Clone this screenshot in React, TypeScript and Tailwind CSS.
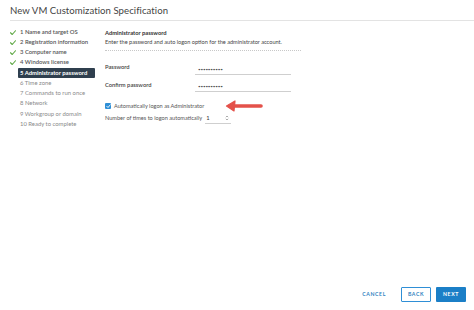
import React from 'react';

const steps = [
  { label: '1 Name and target OS', done: true },
  { label: '2 Registration information', done: true },
  { label: '3 Computer name', done: true },
  { label: '4 Windows license', done: true },
  { label: '5 Administrator password', active: true },
  { label: '6 Time zone' },
  { label: '7 Commands to run once' },
  { label: '8 Network' },
  { label: '9 Workgroup or domain' },
  { label: '10 Ready to complete' },
];

function Check() {
  return (
    <svg width="6" height="5" viewBox="0 0 12 10" fill="none">
      <path d="M1 5.5 L4.5 9 L11 1.5" stroke="#5fa845" strokeWidth="2.2" strokeLinecap="round" strokeLinejoin="round" />
    </svg>
  );
}

function Arrow() {
  return (
    <svg width="38" height="12" viewBox="0 0 38 12">
      <path d="M36 6 L9 6" stroke="#e4514a" strokeWidth="3.6" strokeLinecap="round" />
      <path d="M1.5 6 L10 1 L9 11 Z" fill="#e4514a" stroke="#e4514a" strokeWidth="1.2" strokeLinejoin="round" />
    </svg>
  );
}

function Spinner() {
  return (
    <svg width="4" height="6" viewBox="0 0 4 6" fill="none">
      <path d="M0.8 2.2 L2 1 L3.2 2.2" stroke="#888" strokeWidth="0.7" />
      <path d="M0.8 3.8 L2 5 L3.2 3.8" stroke="#888" strokeWidth="0.7" />
    </svg>
  );
}

export default function App() {
  return (
    <div
      className="w-[474px] h-[310px] bg-white flex flex-col text-[#333]"
      style={{ fontFamily: 'Lato, "Open Sans", sans-serif' }}
    >
      {/* Title */}
      <div className="ml-[10px] h-[21px] pt-[5px] border-b border-[#e3e3e3]">
        <h1 className="text-[9.6px] leading-[12px] text-[#444] tracking-[0.05px]">
          New VM Customization Specification
        </h1>
      </div>

      <div className="flex flex-1">
        {/* Steps */}
        <div className="w-[95px] pt-[6px] pl-[10px]">
          {steps.map((s) => (
            <div key={s.label} className="flex items-center h-[10.25px]">
              <div className="w-[8px] flex items-center">{s.done && <Check />}</div>
              <div
                className={
                  s.active
                    ? 'flex-1 h-[10px] flex items-center pl-[2px] rounded-[1px] bg-[#2f3f4e] text-white font-bold text-[5.9px]'
                    : s.done
                    ? 'flex-1 pl-[2px] text-[5.9px] font-semibold text-[#555]'
                    : 'flex-1 pl-[2px] text-[5.9px] text-[#8a8a8a]'
                }
              >
                {s.label}
              </div>
            </div>
          ))}
        </div>

        {/* Content */}
        <div className="flex-1 pl-[10px] pt-[8px]">
          <div className="w-[196px] border-b border-dotted border-[#c8c8c8] pb-[4px]">
            <div className="text-[5.8px] font-bold text-[#333] leading-[8px]">Administrator password</div>
            <div className="text-[5.6px] text-[#444] leading-[9px]">
              Enter the password and auto logon option for the administrator account.
            </div>
          </div>

          <div className="mt-[12px] flex items-end">
            <div className="w-[90px] text-[5.8px] font-semibold text-[#444] pb-[3px]">Password</div>
            <div className="w-[96px] border-b border-[#cfcfcf] pl-[3px] h-[10px] flex items-center text-[4.6px] tracking-[-0.2px] text-[#555]">
              ••••••••••
            </div>
          </div>
          <div className="mt-[6px] flex items-end">
            <div className="w-[90px] text-[5.8px] font-semibold text-[#444] pb-[3px]">Confirm password</div>
            <div className="w-[96px] border-b border-[#cfcfcf] pl-[3px] h-[10px] flex items-center text-[4.6px] tracking-[-0.2px] text-[#555]">
              ••••••••••
            </div>
          </div>

          <div className="mt-[9px] flex items-center h-[10px]">
            <div className="w-[6px] h-[6px] rounded-[1px] bg-[#2f8fd6] flex items-center justify-center">
              <svg width="5" height="4" viewBox="0 0 10 8" fill="none">
                <path d="M1 4 L4 7 L9 1" stroke="white" strokeWidth="1.8" />
              </svg>
            </div>
            <span className="ml-[3px] text-[5.6px] text-[#555]">Automatically logon as Administrator</span>
            <span className="ml-[21px] flex items-center">
              <Arrow />
            </span>
          </div>

          <div className="mt-[2px] flex items-end h-[11px]">
            <span className="text-[5.6px] text-[#555] pb-[2px]">Number of times to logon automatically</span>
            <div className="ml-[3px] w-[26px] border-b border-[#cfcfcf] flex items-center justify-between pl-[1px] pr-[2px] pb-[1px]">
              <span className="text-[5.8px] text-[#333]">1</span>
              <Spinner />
            </div>
          </div>
        </div>
      </div>

      {/* Footer */}
      <div className="h-[15px] mb-[8px] flex items-center justify-end pr-[8px] gap-[5px]">
        <button className="h-[15px] px-[10px] text-[5.2px] font-bold tracking-[0.6px] text-[#2f7fc0]">CANCEL</button>
        <button className="w-[30px] h-[15px] border border-[#2f8fd6] rounded-[1px] text-[5.2px] font-bold tracking-[0.6px] text-[#2f7fc0] bg-white">
          BACK
        </button>
        <button className="w-[30px] h-[15px] rounded-[1px] bg-[#1b7fc7] text-[5.2px] font-bold tracking-[0.6px] text-white">
          NEXT
        </button>
      </div>
    </div>
  );
}
